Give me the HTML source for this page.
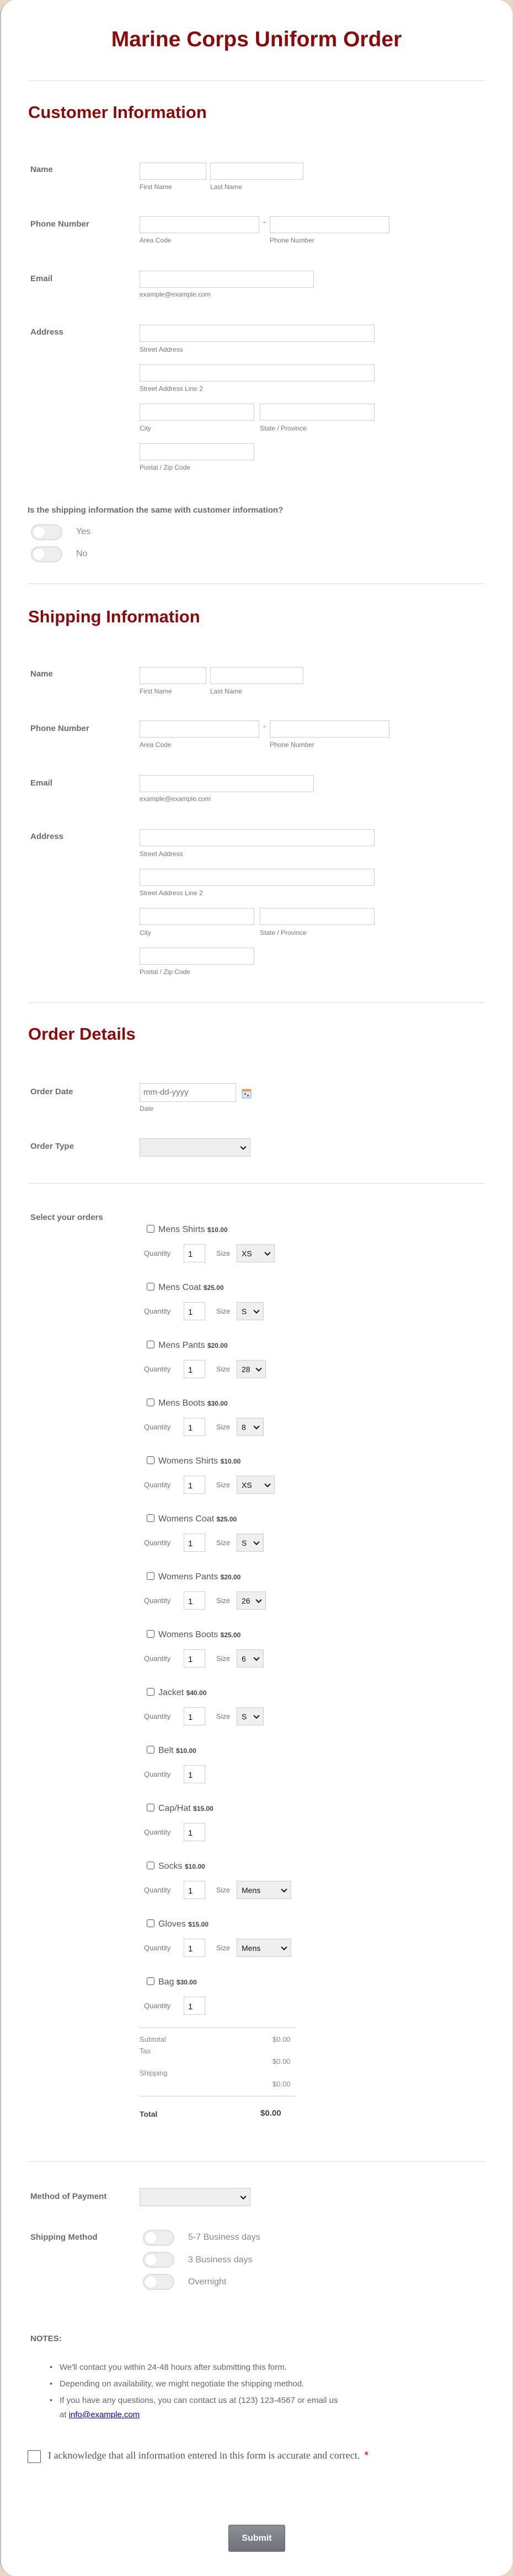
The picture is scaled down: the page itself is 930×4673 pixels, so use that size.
<!DOCTYPE html>
<html><head><meta charset="utf-8">
<style>
*{box-sizing:border-box;margin:0;padding:0}
html,body{width:930px;height:4673px;background:#e6d9c3;overflow:hidden}
body{font-family:"Liberation Sans",Arial,sans-serif;position:relative}
.card{position:absolute;left:0;top:0;width:930px;height:4673px;background:#fff;border-radius:28px;border-left:2px solid #bbb;border-right:1px solid #ddd}
.a{position:absolute}
.t{position:absolute;left:0;width:930px;text-align:center;top:46px;font-size:39px;font-weight:bold;color:#8c0a0a;line-height:52px}
.h{position:absolute;left:51px;font-size:31px;font-weight:bold;color:#8c0a0a;line-height:40px}
.hr{position:absolute;left:50px;width:830px;height:2px;background:#ececec}
.l{position:absolute;left:55px;font-size:15px;font-weight:bold;color:#6b6b6b;line-height:20px}
.in{position:absolute;border:1px solid #ccc;background:#fff;height:31px}
.s{position:absolute;font-size:12px;color:#777;line-height:16px}
.tg{position:absolute;width:57px;height:29px;border:2px solid #ddd;background:#eee;border-radius:15px}
.tg:after{content:"";position:absolute;left:2px;top:2px;width:21px;height:21px;border-radius:50%;background:#fff;box-shadow:0 0 1px #bbb}
.tl{position:absolute;font-size:16px;color:#888;line-height:20px}
.sel{position:absolute;border:1px solid #ccc;background:#efefef;height:33px}
.sel:after,.sz:after{content:"";position:absolute;right:8px;top:50%;width:6px;height:6px;border-right:2px solid #111;border-bottom:2px solid #111;transform:translateY(-70%) rotate(45deg)}
.it{position:absolute;left:266px;height:22px;line-height:22px;font-size:16px;color:#555;white-space:nowrap}
.it i{display:inline-block;width:14px;height:14px;border:1.5px solid #555;border-radius:3px;vertical-align:-1px;margin-right:7px}
.it b{font-size:12px;color:#444}
.q{position:absolute;left:261px;height:33px;line-height:33px;font-size:13px;color:#777;white-space:nowrap}
.qi{position:absolute;left:72px;top:0;width:39px;height:33px;border:1px solid #ccc;color:#111;font-size:15px;padding-left:7px;line-height:35px}
.szl{position:absolute;left:131px;top:0}
.sz{position:absolute;left:168px;top:0;height:33px;border:1px solid #ccc;background:#efefef;color:#111;font-size:14px;padding-left:8px;line-height:33px}
.tot{position:absolute;font-size:13px;color:#888;line-height:16px}
</style></head><body>
<div class="card"></div>
<div class="t">Marine Corps Uniform Order</div>
<div class="hr" style="top:145px"></div>

<div class="h" style="top:184px">Customer Information</div>
<div class="l" style="top:298px">Name</div>
<div class="in" style="left:253px;top:295px;width:121px"></div>
<div class="in" style="left:381px;top:295px;width:169px"></div>
<div class="s" style="left:253px;top:331px">First Name</div>
<div class="s" style="left:381px;top:331px">Last Name</div>
<div class="l" style="top:397px">Phone Number</div>
<div class="in" style="left:253px;top:392px;width:217px"></div>
<div class="a" style="left:477px;top:394px;color:#666;font-size:14px">-</div>
<div class="in" style="left:489px;top:392px;width:217px"></div>
<div class="s" style="left:253px;top:379px;top:379px;top:379px;top:379px;top:378px;top:380px;top:379px;top:379px;top:379px;top:379px;top:379px;top:379px;top:379px;top:379px;top:379px;top:379px;top:379px;top:379px;top:379px;top:379px;top:379px;top:379px;top:379px;top:379px;top:428px">Area Code</div>
<div class="s" style="left:489px;top:428px">Phone Number</div>
<div class="l" style="top:496px">Email</div>
<div class="in" style="left:253px;top:491px;width:316px"></div>
<div class="s" style="left:253px;top:526px">example@example.com</div>
<div class="l" style="top:593px">Address</div>
<div class="in" style="left:253px;top:589px;width:426px"></div>
<div class="s" style="left:253px;top:626px">Street Address</div>
<div class="in" style="left:253px;top:661px;width:426px"></div>
<div class="s" style="left:253px;top:697px">Street Address Line 2</div>
<div class="in" style="left:253px;top:732px;width:208px"></div>
<div class="in" style="left:471px;top:732px;width:208px"></div>
<div class="s" style="left:253px;top:769px">City</div>
<div class="s" style="left:471px;top:769px">State / Province</div>
<div class="in" style="left:253px;top:804px;width:208px"></div>
<div class="s" style="left:253px;top:840px">Postal / Zip Code</div>
<div class="l" style="left:50px;top:916px">Is the shipping information the same with customer information?</div>
<div class="tg" style="left:56px;top:951px"></div><div class="tl" style="left:138px;top:955px">Yes</div>
<div class="tg" style="left:56px;top:991px"></div><div class="tl" style="left:138px;top:995px">No</div>

<div class="hr" style="top:1058px"></div>
<div class="h" style="top:1099px">Shipping Information</div>
<div class="l" style="top:1213px">Name</div>
<div class="in" style="left:253px;top:1210px;width:121px"></div>
<div class="in" style="left:381px;top:1210px;width:169px"></div>
<div class="s" style="left:253px;top:1246px">First Name</div>
<div class="s" style="left:381px;top:1246px">Last Name</div>
<div class="l" style="top:1312px">Phone Number</div>
<div class="in" style="left:253px;top:1307px;width:217px"></div>
<div class="a" style="left:477px;top:1309px;color:#666;font-size:14px">-</div>
<div class="in" style="left:489px;top:1307px;width:217px"></div>
<div class="s" style="left:253px;top:1343px">Area Code</div>
<div class="s" style="left:489px;top:1343px">Phone Number</div>
<div class="l" style="top:1411px">Email</div>
<div class="in" style="left:253px;top:1406px;width:316px"></div>
<div class="s" style="left:253px;top:1441px">example@example.com</div>
<div class="l" style="top:1508px">Address</div>
<div class="in" style="left:253px;top:1504px;width:426px"></div>
<div class="s" style="left:253px;top:1541px">Street Address</div>
<div class="in" style="left:253px;top:1576px;width:426px"></div>
<div class="s" style="left:253px;top:1612px">Street Address Line 2</div>
<div class="in" style="left:253px;top:1647px;width:208px"></div>
<div class="in" style="left:471px;top:1647px;width:208px"></div>
<div class="s" style="left:253px;top:1684px">City</div>
<div class="s" style="left:471px;top:1684px">State / Province</div>
<div class="in" style="left:253px;top:1719px;width:208px"></div>
<div class="s" style="left:253px;top:1755px">Postal / Zip Code</div>

<div class="hr" style="top:1818px"></div>
<div class="h" style="top:1856px">Order Details</div>
<div class="l" style="top:1971px">Order Date</div>
<div class="in" style="left:253px;top:1965px;width:175px;height:34px;font-size:15px;color:#777;padding-left:6px;line-height:32px">mm-dd-yyyy</div>
<svg class="a" style="left:438px;top:1975px" width="18" height="18" viewBox="0 0 18 18"><rect x="1" y="1" width="16" height="16" fill="#dbe8f7" stroke="#7aa0d0"/><rect x="1" y="1" width="16" height="4" fill="#f0a040"/><rect x="5" y="8" width="3" height="3" fill="#667"/><rect x="10" y="11" width="3" height="3" fill="#667"/></svg>
<div class="s" style="left:253px;top:2003px">Date</div>
<div class="l" style="top:2070px">Order Type</div>
<div class="sel" style="left:253px;top:2065px;width:201px"></div>
<div class="hr" style="top:2146px"></div>
<div class="l" style="top:2199px">Select your orders</div>

<div class="it" style="top:2220px"><i></i>Mens Shirts <b>$10.00</b></div>
<div class="q" style="top:2257px">Quantity<div class="qi">1</div><span class="szl">Size</span><div class="sz" style="width:69px">XS</div></div>
<div class="it" style="top:2325px"><i></i>Mens Coat <b>$25.00</b></div>
<div class="q" style="top:2362px">Quantity<div class="qi">1</div><span class="szl">Size</span><div class="sz" style="width:49px">S</div></div>
<div class="it" style="top:2430px"><i></i>Mens Pants <b>$20.00</b></div>
<div class="q" style="top:2467px">Quantity<div class="qi">1</div><span class="szl">Size</span><div class="sz" style="width:53px">28</div></div>
<div class="it" style="top:2535px"><i></i>Mens Boots <b>$30.00</b></div>
<div class="q" style="top:2572px">Quantity<div class="qi">1</div><span class="szl">Size</span><div class="sz" style="width:49px">8</div></div>
<div class="it" style="top:2640px"><i></i>Womens Shirts <b>$10.00</b></div>
<div class="q" style="top:2677px">Quantity<div class="qi">1</div><span class="szl">Size</span><div class="sz" style="width:69px">XS</div></div>
<div class="it" style="top:2745px"><i></i>Womens Coat <b>$25.00</b></div>
<div class="q" style="top:2782px">Quantity<div class="qi">1</div><span class="szl">Size</span><div class="sz" style="width:49px">S</div></div>
<div class="it" style="top:2850px"><i></i>Womens Pants <b>$20.00</b></div>
<div class="q" style="top:2887px">Quantity<div class="qi">1</div><span class="szl">Size</span><div class="sz" style="width:53px">26</div></div>
<div class="it" style="top:2955px"><i></i>Womens Boots <b>$25.00</b></div>
<div class="q" style="top:2992px">Quantity<div class="qi">1</div><span class="szl">Size</span><div class="sz" style="width:49px">6</div></div>
<div class="it" style="top:3060px"><i></i>Jacket <b>$40.00</b></div>
<div class="q" style="top:3097px">Quantity<div class="qi">1</div><span class="szl">Size</span><div class="sz" style="width:49px">S</div></div>
<div class="it" style="top:3165px"><i></i>Belt <b>$10.00</b></div>
<div class="q" style="top:3202px">Quantity<div class="qi">1</div></div>
<div class="it" style="top:3270px"><i></i>Cap/Hat <b>$15.00</b></div>
<div class="q" style="top:3307px">Quantity<div class="qi">1</div></div>
<div class="it" style="top:3375px"><i></i>Socks <b>$10.00</b></div>
<div class="q" style="top:3412px">Quantity<div class="qi">1</div><span class="szl">Size</span><div class="sz" style="width:99px">Mens</div></div>
<div class="it" style="top:3480px"><i></i>Gloves <b>$15.00</b></div>
<div class="q" style="top:3517px">Quantity<div class="qi">1</div><span class="szl">Size</span><div class="sz" style="width:99px">Mens</div></div>
<div class="it" style="top:3585px"><i></i>Bag <b>$30.00</b></div>
<div class="q" style="top:3622px">Quantity<div class="qi">1</div></div>

<div class="a" style="left:253px;top:3678px;width:283px;height:1px;background:#ccc"></div>
<div class="tot" style="left:253px;top:3692px">Subtotal</div><div class="tot" style="left:494px;top:3692px">$0.00</div>
<div class="tot" style="left:253px;top:3713px">Tax</div><div class="tot" style="left:494px;top:3732px">$0.00</div>
<div class="tot" style="left:253px;top:3753px">Shipping</div><div class="tot" style="left:494px;top:3773px">$0.00</div>
<div class="a" style="left:253px;top:3802px;width:283px;height:1px;background:#ccc"></div>
<div class="a" style="left:253px;top:3827px;font-size:14px;font-weight:bold;color:#444">Total</div>
<div class="a" style="left:472px;top:3825px;font-size:15px;font-weight:bold;color:#444">$0.00</div>

<div class="hr" style="top:3920px"></div>
<div class="l" style="top:3975px">Method of Payment</div>
<div class="sel" style="left:253px;top:3969px;width:201px;height:33px"></div>
<div class="l" style="top:4049px">Shipping Method</div>
<div class="tg" style="left:259px;top:4045px"></div><div class="tl" style="left:341px;top:4049px">5-7 Business days</div>
<div class="tg" style="left:259px;top:4085px"></div><div class="tl" style="left:341px;top:4090px">3 Business days</div>
<div class="tg" style="left:259px;top:4125px"></div><div class="tl" style="left:341px;top:4130px">Overnight</div>

<div class="a" style="left:55px;top:4234px;font-size:15px;font-weight:bold;color:#666">NOTES:</div>
<ul class="a" style="left:90px;top:4282px;font-size:15px;color:#666;line-height:26px;list-style:none;width:680px">
<li style="position:relative;padding-left:18px;margin-bottom:4px"><span style="position:absolute;left:0">•</span>We'll contact you within 24-48 hours after submitting this form.</li>
<li style="position:relative;padding-left:18px;margin-bottom:4px"><span style="position:absolute;left:0">•</span>Depending on availability, we might negotiate the shipping method.</li>
<li style="position:relative;padding-left:18px"><span style="position:absolute;left:0">•</span>If you have any questions, you can contact us at (123) 123-4567 or email us<br>at <a style="color:#00e;text-decoration:underline">info@example.com</a></li>
</ul>
<div class="a" style="left:50px;top:4445px;width:24px;height:23px;border:1.5px solid #555;border-radius:2px"></div>
<div class="a" style="left:87px;top:4444px;font-family:'Liberation Serif',serif;font-size:18px;color:#555;white-space:nowrap">I acknowledge that all information entered in this form is accurate and correct. <span style="color:#d33;font-weight:bold;font-family:'Liberation Sans',sans-serif;margin-left:4px">*</span></div>
<div class="a" style="left:414px;top:4580px;width:103px;height:49px;border-radius:3px;background:linear-gradient(#8d9097,#6e7178);border:1px solid #666;color:#fff;font-size:16px;font-weight:bold;text-align:center;line-height:47px">Submit</div>
</body></html>
